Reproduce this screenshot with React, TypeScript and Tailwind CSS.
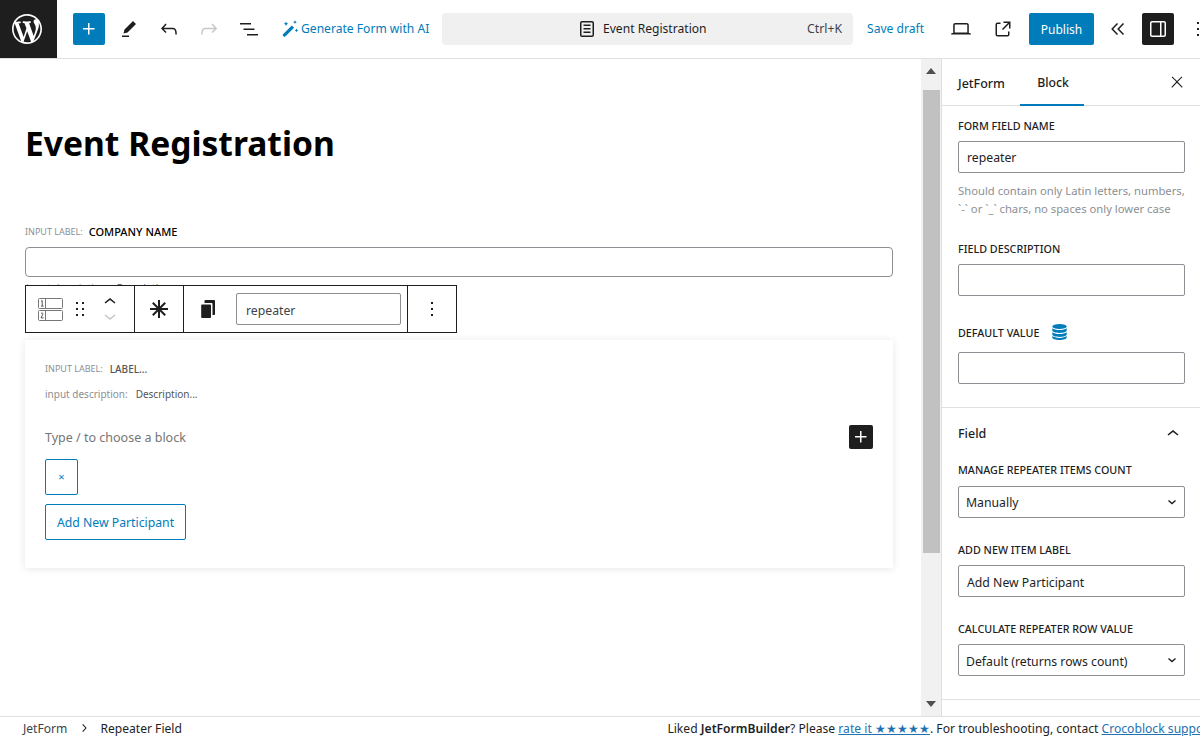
import React from "react";

const I = ({ d, size = 24, className = "", fill = "currentColor" }: { d: string; size?: number; className?: string; fill?: string }) => (
  <svg width={size} height={size} viewBox="0 0 24 24" fill={fill} className={"shrink-0 " + className}>
    <path d={d} />
  </svg>
);

const P = {
  plus: "M11 12.5V17.5H12.5V12.5H17.5V11H12.5V6H11V11H6V12.5H11Z",
  pencil: "m19 7-3-3-8.5 8.5-1 4 4-1L19 7Zm-7 11.5H5V20h7v-1.5Z",
  undo: "M18.3 11.7c-.6-.6-1.4-.9-2.3-.9H6.7l2.9-3.3-1.1-1-4.5 5L8.5 16l1-1-2.7-2.7H16c.5 0 .9.2 1.3.5 1 1 1 3.4 1 4.5v.3h1.5v-.2c0-1.5 0-4.3-1.5-5.7z",
  redo: "M15.6 6.5l-1.1 1 2.9 3.3H8c-.9 0-1.7.3-2.3.9-1.4 1.5-1.4 4.2-1.4 5.6v.2h1.5v-.3c0-1.1 0-3.5 1-4.5.3-.3.7-.5 1.3-.5h9.2L14.5 15l1.1 1.1 4.6-4.6-4.6-5z",
  list: "M3 6h11v1.5H3V6Zm3.5 5.5h11V13h-11v-1.5ZM21 17H10v1.5h11V17Z",
  doc: "M15.5 7.5h-7V9h7V7.5Zm-7 3.5h7v1.5h-7V11Zm7 3.5h-7V16h7v-1.5ZM17 4H7a2 2 0 0 0-2 2v12a2 2 0 0 0 2 2h10a2 2 0 0 0 2-2V6a2 2 0 0 0-2-2Zm.5 14a.5.5 0 0 1-.5.5H7a.5.5 0 0 1-.5-.5V6a.5.5 0 0 1 .5-.5h10a.5.5 0 0 1 .5.5v12Z",
  laptop: "M20.5 16h-.7V8c0-1.1-.9-2-2-2H6.2c-1.1 0-2 .9-2 2v8h-.7c-.8 0-1.5.7-1.5 1.5h20c0-.8-.7-1.5-1.5-1.5zM5.7 8c0-.3.2-.5.5-.5h11.6c.3 0 .5.2.5.5v7.6H5.7V8z",
  external: "M19.5 4.5h-7V6h4.44l-5.97 5.97 1.06 1.06L18 7.06v4.44h1.5v-7Zm-13 1a2 2 0 0 0-2 2v10a2 2 0 0 0 2 2h10a2 2 0 0 0 2-2v-3H17v3a.5.5 0 0 1-.5.5h-10a.5.5 0 0 1-.5-.5v-10a.5.5 0 0 1 .5-.5h3V5.5h-3Z",
  sidebar: "M18 4H6c-1.1 0-2 .9-2 2v12c0 1.1.9 2 2 2h12c1.1 0 2-.9 2-2V6c0-1.1-.9-2-2-2zm-4 14.5H6c-.3 0-.5-.2-.5-.5V6c0-.3.2-.5.5-.5h8v13zm4.5-.5c0 .3-.2.5-.5.5h-2.5v-13H18c.3 0 .5.2.5.5v12z",
  more: "M13 19h-2v-2h2v2zm0-6h-2v-2h2v2zm0-6h-2V5h2v2z",
  close: "M13 11.8l6.1-6.3-1-1-6.1 6.2-6.1-6.2-1 1 6.1 6.3-6.5 6.7 1 1 6.5-6.6 6.5 6.6 1-1z",
  up: "M6.5 12.4L12 8l5.5 4.4-.9 1.2L12 10l-4.5 3.6-1-1.2z",
  down: "M17.5 11.6L12 16l-5.5-4.4.9-1.2L12 14l4.5-3.6 1 1.2z",
  drag: "M8 7h2V5H8v2zm0 6h2v-2H8v2zm0 6h2v-2H8v2zm6-14v2h2V5h-2zm0 8h2v-2h-2v2zm0 6h2v-2h-2v2z",
  chevRight: "M10.6 6L9.4 7l4.6 5-4.6 5 1.2 1 5.4-6z",
  copy: "M8.5 6V3.8c0-.4.3-.8.8-.8h8.900c.4 0 .8.4.8.8v13.400c0 .4-.4.8-.8.8H16.500V7c0-.6-.4-1-1-1H8.500ZM6 7.500h8.200c.4 0 .8.4.8.8v11.900c0 .4-.4.8-.8.8H6c-.5 0-.8-.4-.8-.8V8.300c0-.4.3-.8.8-.8Z",
};

const WP = "M20 10c0-5.51-4.49-10-10-10C4.48 0 0 4.49 0 10c0 5.52 4.48 10 10 10 5.51 0 10-4.48 10-10zM7.78 15.37L4.37 6.22c.55-.02 1.17-.08 1.17-.08.5-.06.44-1.13-.06-1.11 0 0-1.45.11-2.37.11-.18 0-.37 0-.58-.01C4.12 2.69 6.87 1.11 10 1.11c2.33 0 4.45.87 6.05 2.34-.68-.11-1.65.39-1.65 1.58 0 .74.45 1.36.9 2.1.35.61.55 1.36.55 2.46 0 1.49-1.4 5-1.4 5l-3.03-8.37c.54-.02.82-.17.82-.17.5-.05.44-1.25-.06-1.22 0 0-1.44.12-2.38.12-.87 0-2.33-.12-2.33-.12-.5-.03-.56 1.2-.06 1.22l.92.08 1.26 3.41zM17.41 10c.24-.64.74-1.87.43-4.25.7 1.29 1.05 2.71 1.05 4.25 0 3.29-1.73 6.24-4.4 7.78.97-2.59 1.94-5.2 2.92-7.78zM6.1 18.09C3.12 16.65 1.11 13.53 1.11 10c0-1.3.23-2.48.72-3.59C3.25 10.3 4.67 14.2 6.1 18.09zm4.03-6.63l2.58 6.98c-.86.29-1.76.45-2.71.45-.79 0-1.57-.11-2.29-.33.81-2.38 1.62-4.74 2.42-7.1z";

const Label = ({ children, className = "" }: { children: React.ReactNode; className?: string }) => (
  <div className={"text-[10.75px] leading-[16px] font-medium uppercase text-[#1e1e1e] " + className}>{children}</div>
);

const Box = ({ value, className = "" }: { value?: string; className?: string }) => (
  <div className={"w-[227px] h-[32px] border border-[#8c8f94] rounded-[2px] px-2 flex items-center text-[12.25px] text-[#1e1e1e] " + className}>{value}</div>
);

const Select = ({ value, className = "", textClass = "" }: { value: string; className?: string; textClass?: string }) => (
  <div className={"w-[227px] h-[32px] border border-[#8c8f94] rounded-[2px] pl-[7px] pr-[5px] flex items-center justify-between text-[12.25px] text-[#1e1e1e] " + className}>
    <span className={textClass}>{value}</span>
    <svg width="14" height="14" viewBox="0 0 14 14" fill="none" stroke="#1e1e1e" strokeWidth="1.4"><path d="M3.5 5.5 7 8.500l3.500-3" /></svg>
  </div>
);

export default function App() {
  return (
    <div className="w-[1200px] h-[738px] overflow-hidden flex flex-col bg-white text-[#1e1e1e] font-['Noto_Sans','Open_Sans',sans-serif] text-[12px]">
      {/* header */}
      <header className="h-[59px] shrink-0 border-b border-[#e0e0e0] flex items-start">
        <div className="w-[57px] h-[58px] bg-[#1e1e1e] flex items-center justify-center shrink-0">
          <svg width="30" height="30" viewBox="0 0 20 20" fill="#fff" className="-ml-[3px]"><path d={WP} /></svg>
        </div>
        <div className="flex items-center h-[58px] pl-[16px] shrink-0">
          <div className="w-[32px] h-[32px] bg-[#007cba] rounded-[2px] flex items-center justify-center text-white">
            <I d={P.plus} />
          </div>
          <I d={P.pencil} className="ml-[12px]" />
          <I d={P.undo} className="ml-[16px]" />
          <I d={P.redo} className="ml-[16px] text-[#c7c7c7]" />
          <I d={P.list} className="ml-[16px]" />
          <svg width="18" height="18" viewBox="0 0 18 18" className="ml-[21px] shrink-0">
            <path d="M1 14.200 9.800 5.400l2.300 2.300L3.300 16.500a1.100 1.100 0 0 1-1.500 0l-.8-.8a1.100 1.100 0 0 1 0-1.500Z" fill="#007cba" />
            <path d="M4 1.500 4.700 3l1.500.7-1.500.7L4 5.900 3.300 4.400 1.800 3.700 3.300 3ZM13 0.300l.6 1.300 1.300.6-1.300.6-.6 1.300-.6-1.300-1.300-.6 1.300-.6ZM14.500 8.500l.6 1.300 1.300.6-1.300.6-.6 1.300-.6-1.300-1.300-.6 1.300-.6Z" fill="#007cba" />
          </svg>
          <span className="ml-[1px] text-[#007cba] whitespace-nowrap w-[129px] text-[12.1px]">Generate Form with AI</span>
          <div className="ml-[12px] w-[411px] h-[32px] bg-[#f0f0f0] rounded-[4px] flex items-center pl-[133px] pr-[11px]">
            <I d={P.doc} />
            <span className="ml-[4px] whitespace-nowrap text-[12.1px]">Event Registration</span>
            <span className="ml-auto whitespace-nowrap text-[#3c434a] text-[12.25px]">Ctrl+K</span>
          </div>
          <span className="ml-[14px] text-[#007cba] whitespace-nowrap w-[58px] text-[12.1px]">Save draft</span>
          <I d={P.laptop} className="ml-[24px]" />
          <I d={P.external} className="ml-[18px]" />
          <div className="ml-[14px] w-[65px] h-[32px] bg-[#007cba] rounded-[2px] text-white flex items-center justify-center pt-[1px]">Publish</div>
          <svg width="24" height="24" viewBox="0 0 24 24" fill="none" stroke="#1e1e1e" strokeWidth="1.5" className="ml-[12px] shrink-0">
            <path d="M11.500 6.500 6.200 12l5.300 5.500M17.500 6.500 12.200 12l5.300 5.500" />
          </svg>
          <div className="ml-[12px] w-[32px] h-[32px] bg-[#1e1e1e] rounded-[2px] flex items-center justify-center text-white shrink-0">
            <I d={P.sidebar} />
          </div>
          <I d={P.more} className="ml-[12px]" />
        </div>
      </header>

      <div className="flex-1 flex min-h-0">
        {/* canvas */}
        <main className="w-[921px] shrink-0 pl-[25px] pr-[28px] overflow-hidden">
          <h1 className="mt-[59px] text-[33.6px] leading-[50px] font-bold text-black whitespace-nowrap">Event Registration</h1>
          <div className="mt-[56px] flex items-center h-[16px] whitespace-nowrap">
            <span className="text-[9px] text-[#8c8f94] uppercase mr-[7px]">Input label:</span>
            <span className="text-[11px] font-medium text-black uppercase -ml-[1px]">Company Name</span>
          </div>
          <div className="mt-[7px] h-[30px] border border-[#8c8f94] rounded-[4px]" />
          <div className="mt-[4px] h-[60px] relative">
            <div className="text-[10px] leading-[10px] whitespace-nowrap pl-[1px] pt-[2px]">
              <span className="text-[#8c8f94] mr-[8px]">input description:</span>
              <span className="text-[#555]">Description...</span>
            </div>
            {/* block toolbar */}
            <div className="absolute left-0 top-[4px] w-[432px] h-[48px] bg-white border border-[#1e1e1e] flex items-center">
              <div className="w-[109px] h-full border-r border-[#1e1e1e] flex items-center shrink-0 pl-[12px]">
                <svg width="25" height="23" viewBox="0 0 25 23" fill="none" stroke="#777" strokeWidth="1" className="shrink-0">
                  <rect x="0.5" y="0.5" width="24" height="10" rx="1" />
                  <rect x="0.5" y="12.5" width="24" height="10" rx="1" />
                  <path d="M7.500.5v10M7.500 12.500v10" />
                  <path d="M3 3.200 4.200 2.600v5.500M3 8.100h2.600M3 15.500c.8-.9 2.300-.4 1.900.7L3 19.900h2.600" stroke="#333" strokeWidth="0.8" />
                </svg>
                <I d={P.drag} className="ml-[5px]" />
                <div className="ml-[6px] flex flex-col items-center shrink-0">
                  <I d={P.up} />
                  <I d={P.down} className="-mt-[10px] text-[#c7c7c7]" />
                </div>
              </div>
              <div className="w-[49px] h-full border-r border-[#1e1e1e] flex items-center justify-center shrink-0">
                <svg width="20" height="20" viewBox="0 0 20 20" stroke="#1e1e1e" strokeWidth="2" fill="none">
                  <path d="M10 1v18M1 10h18M3.800 3.800l12.400 12.400M16.200 3.800 3.800 16.200" />
                </svg>
              </div>
              <div className="w-[224px] h-full border-r border-[#1e1e1e] flex items-center shrink-0 pl-[12px]">
                <I d={P.copy} />
                <div className="ml-[16px] w-[165px] h-[32px] border border-[#8c8f94] rounded-[2px] pl-[9px] pt-[4px] flex items-center text-[#3c434a] text-[12.25px]">repeater</div>
              </div>
              <div className="flex-1 flex items-center justify-center"><I d={P.more} /></div>
            </div>
          </div>
          {/* card */}
          <section className="h-[228px] -mt-[1px] bg-white shadow-[0_1px_8px_rgba(0,0,0,0.1)] px-[20px] pt-[21px]">
            <div className="flex items-center h-[16px] whitespace-nowrap">
              <span className="text-[9px] text-[#8c8f94] uppercase mr-[7px]">Input label:</span>
              <span className="text-[10px] font-medium text-[#555] uppercase">Label...</span>
            </div>
            <div className="mt-[9px] flex items-center h-[16px] whitespace-nowrap">
              <span className="text-[10px] text-[#8c8f94] mr-[8px]">input description:</span>
              <span className="text-[10px] text-[#555] pt-[1px]">Description...</span>
            </div>
            <div className="mt-[23px] h-[24px] flex items-center justify-between">
              <span className="text-[#757575] text-[12.5px] pt-[2px]">Type / to choose a block</span>
              <div className="w-[24px] h-[24px] bg-[#1e1e1e] rounded-[2px] flex items-center justify-center text-white">
                <I d={P.plus} />
              </div>
            </div>
            <div className="mt-[10px] w-[33px] h-[36px] border border-[#007cba] rounded-[2px] flex items-center justify-center text-[#007cba] text-[11px]">×</div>
            <div className="mt-[9px] w-[141px] h-[36px] border border-[#007cba] rounded-[2px] flex items-center justify-center text-[#007cba] whitespace-nowrap text-[12.25px] pt-[2px]">Add New Participant</div>
          </section>
        </main>

        {/* scrollbar */}
        <div className="w-[20px] shrink-0 bg-[#f1f1f1] flex flex-col items-center">
          <svg width="10" height="6" viewBox="0 0 10 6" fill="#505050" className="mt-[9px] shrink-0"><path d="M0 6 5 0l5 6Z" /></svg>
          <div className="mt-[16px] ml-[1px] w-[17px] h-[463px] bg-[#c1c1c1] shrink-0" />
          <div className="flex-1" />
          <svg width="10" height="6" viewBox="0 0 10 6" fill="#505050" className="mb-[9px] shrink-0"><path d="M0 0h10L5 6Z" /></svg>
        </div>

        {/* sidebar */}
        <aside className="flex-1 border-l border-[#e0e0e0] flex flex-col min-w-0">
          <div className="h-[47px] shrink-0 border-b border-[#e0e0e0] flex items-center">
            <div className="w-[78px] h-full flex items-center pl-[16px] pt-[4px] font-medium text-[12.5px]">JetForm</div>
            <div className="w-[64px] h-[47px] flex items-center justify-center pt-[5px] pl-[2px] font-medium text-[12.25px] border-b-2 border-[#007cba]">Block</div>
            <I d={P.close} size={18} className="ml-auto mr-[14px] -mt-[1px]" />
          </div>
          <div className="border-b border-[#e0e0e0] h-[302px] shrink-0 pl-[16px] pt-[12px]">
            <Label>Form Field Name</Label>
            <Box value="repeater" className="mt-[7px] pt-[3px]" />
            <p className="mt-[9px] text-[11.25px] leading-[18px] text-[#8c8f94] whitespace-nowrap">Should contain only Latin letters, numbers,<br />`-` or `_` chars, no spaces only lower case</p>
            <Label className="mt-[23px]">Field Description</Label>
            <Box className="mt-[7px]" />
            <div className="mt-[25px] flex items-center h-[24px]">
              <Label>Default Value</Label>
              <svg width="15" height="16" viewBox="0 0 15 16" fill="#007cba" className="ml-[13px] -mt-[2px]">
                <ellipse cx="7.500" cy="2.600" rx="7.200" ry="2.500" />
                <path d="M.3 4.300v2.200c0 1.300 3.200 2.400 7.200 2.400s7.200-1.100 7.200-2.400V4.300c-1.300 1.200-4 1.800-7.200 1.800S1.600 5.500.3 4.300ZM.3 8.300v2.200c0 1.300 3.200 2.400 7.200 2.400s7.200-1.100 7.200-2.400V8.300c-1.300 1.200-4 1.800-7.200 1.800S1.600 9.500.3 8.300ZM.3 12.100v1.300c0 1.400 3.200 2.500 7.200 2.500s7.200-1.100 7.200-2.500v-1.300c-1.300 1.200-4 1.800-7.200 1.800S1.600 13.300.3 12.100Z" />
              </svg>
            </div>
            <Box className="mt-[7px]" />
          </div>
          <div className="border-b border-[#e0e0e0] h-[292px] shrink-0 pl-[16px] pt-[14px]">
            <div className="flex items-center justify-between h-[24px] pr-[15px] font-medium text-[12.5px]">
              <span>Field</span>
              <I d={P.up} className="-mt-[1px]" />
            </div>
            <Label className="mt-[16px]">Manage repeater items count</Label>
            <Select value="Manually" className="mt-[8px]" textClass="pt-[3px]" />
            <Label className="mt-[24px]">Add new item label</Label>
            <Box value="Add New Participant" className="mt-[7px] pt-[4px]" />
            <Label className="mt-[24px]">Calculate repeater row value</Label>
            <Select value="Default (returns rows count)" className="mt-[7px]" textClass="pt-[4px]" />
          </div>
        </aside>
      </div>

      {/* footer */}
      <footer className="h-[22px] shrink-0 border-t border-[#e0e0e0] flex items-center whitespace-nowrap overflow-hidden">
        <span className="ml-[23px] text-[#3c434a] text-[12.1px] pt-[4px]">JetForm</span>
        <I d={P.chevRight} size={16} className="ml-[9px] mr-[8px] mt-[1px]" />
        <span className="w-[81px] text-[12.1px] pt-[4px]">Repeater Field</span>
        <span className="ml-[486px] text-[12.13px] pt-[4px]">
          Liked <b className="font-semibold">JetFormBuilder</b>? Please <span className="text-[#2271b1] underline">rate it ★★★★★</span>. For troubleshooting, contact <span className="text-[#2271b1] underline">Crocoblock support</span>
        </span>
      </footer>
    </div>
  );
}
